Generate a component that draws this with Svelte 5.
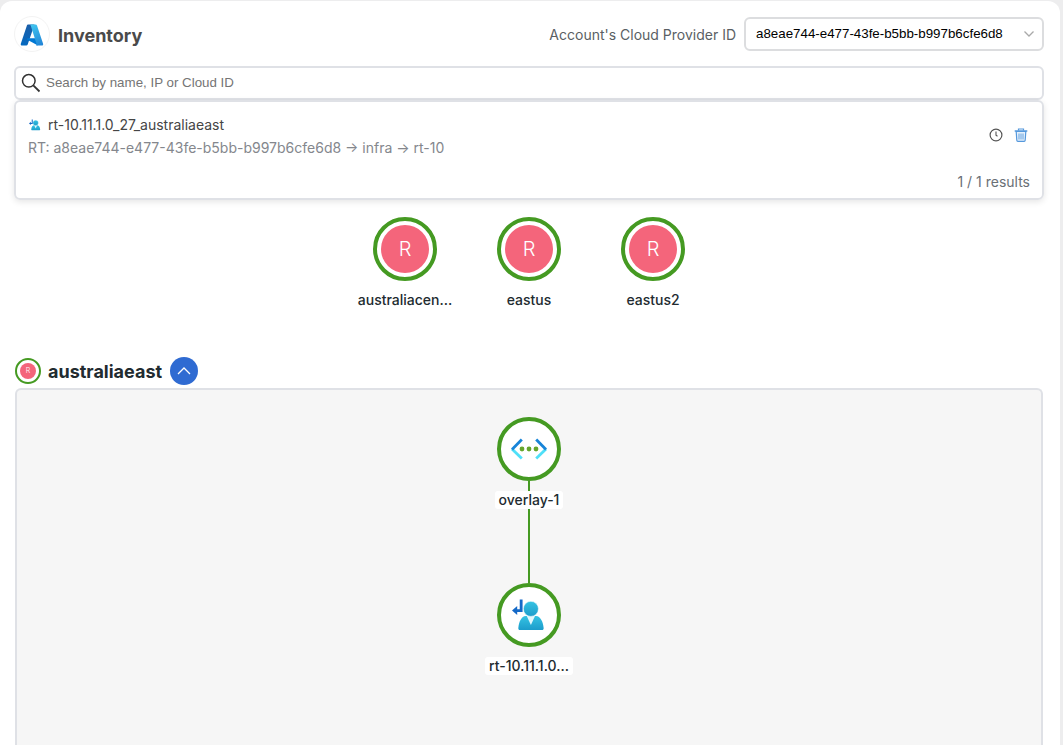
<script>
  const accounts = ['a8eae744-e477-43fe-b5bb-b997b6cfe6d8'];
  const regions = ['australiacen...', 'eastus', 'eastus2'];
  let account = $state(accounts[0]);
  let query = $state('');
  let open = $state(true);
</script>

{#snippet routeIcon(id)}
  <svg class="route" viewBox="0 0 36 36" aria-hidden="true">
    <defs>
      <linearGradient id="{id}-body" x1="0" y1="0" x2="0" y2="1">
        <stop offset="0" stop-color="#35c3e3" />
        <stop offset="1" stop-color="#1c9ccb" />
      </linearGradient>
    </defs>
    <path d="M8.500 34C7.300 34 6.500 33 6.700 31.700C7.500 24.500 10 19.500 14.500 19H25.500C30 19.500 32.800 24.500 33.500 31.700C33.700 33 32.900 34 31.700 34Z" fill="url(#{id}-body)" />
    <path d="M15.500 18.800L20 28.500L24.500 18.800Z" fill="#e4f8fd" />
    <circle cx="20" cy="11.500" r="8" fill="url(#{id}-body)" stroke="#fff" stroke-width="0.600" />
    <path d="M8.200 1.500H11.200V14.700H5.500V18L0 13.200L5.500 8.500V11.800H8.200Z" fill="#1569c7" />
  </svg>
{/snippet}

<main class="page">
  <header class="top">
    <span class="logo">
      <svg viewBox="0 0 24 24" width="24" height="24" aria-hidden="true">
        <defs>
          <linearGradient id="az-left" x1="0.600" y1="0" x2="0.300" y2="1">
            <stop offset="0" stop-color="#1b5ea8" />
            <stop offset="1" stop-color="#0669bf" />
          </linearGradient>
          <linearGradient id="az-right" x1="0.300" y1="0" x2="0.700" y2="1">
            <stop offset="0" stop-color="#3fc4ef" />
            <stop offset="1" stop-color="#2387d8" />
          </linearGradient>
        </defs>
        <path d="M8 1.500H14.500L7.700 21.500C7.500 22.100 7 22.500 6.300 22.500H2C1 22.500 .500 21.600 .800 20.700L6.900 2.400C7.100 1.800 7.400 1.500 8 1.500Z" fill="url(#az-left)" />
        <path d="M8 15.200H17.500L18 22.500L7.300 16.700C6.600 16.200 7 15.200 8 15.200Z" fill="#0078d4" />
        <path d="M9.500 1.500H15.600C16.300 1.500 16.800 1.900 17 2.400L23.100 20.700C23.400 21.600 22.900 22.500 22 22.500H15.300C16.300 22.500 16.700 21.600 16.500 20.700L10.700 2.400C10.500 1.900 10.100 1.500 9.500 1.500Z" fill="url(#az-right)" />
      </svg>
    </span>
    <h1>Inventory</h1>
    <label for="account">Account's Cloud Provider ID</label>
    <div class="picker">
      <select id="account" bind:value={account}>
        {#each accounts as id}<option value={id}>{id}</option>{/each}
      </select>
      <svg viewBox="0 0 12 12" width="12" height="12" aria-hidden="true"><path d="M1.500 3.500L6 8L10.500 3.500" fill="none" stroke="#a9a9a9" stroke-width="1.300" /></svg>
    </div>
  </header>

  <div class="search">
    <svg viewBox="0 0 20 20" width="20" height="20" aria-hidden="true">
      <circle cx="7.800" cy="7.800" r="6.300" fill="none" stroke="#333" stroke-width="1.500" />
      <path d="M12.300 12.300L18.500 18.500" stroke="#333" stroke-width="1.800" />
    </svg>
    <input type="text" aria-label="Search by name, IP or Cloud ID" placeholder="Search by name, IP or Cloud ID" bind:value={query} />
  </div>

  <section class="results">
    <div class="result">
      <div class="info">
        <a class="name" href="#route">{@render routeIcon('small')}<span>rt-10.11.1.0_27_australiaeast</span></a>
        <div class="trail">RT: a8eae744-e477-43fe-b5bb-b997b6cfe6d8 → infra → rt-10</div>
      </div>
      <div class="tools">
        <button aria-label="History">
          <svg viewBox="0 0 14 14" width="14" height="14"><circle cx="7" cy="7" r="5.900" fill="none" stroke="#555" stroke-width="1.200" /><path d="M7 3.500V7.300L8.500 8.300" fill="none" stroke="#555" stroke-width="1.100" /></svg>
        </button>
        <button aria-label="Delete">
          <svg viewBox="0 0 14 14" width="14" height="14" fill="none" stroke="#5598dc">
            <path d="M2.200 3.500H11.800L11.200 12.300Q11.100 13.300 10.200 13.300H3.800Q2.900 13.300 2.800 12.300Z" fill="#e6f1fc" stroke-width="1.200" />
            <path d="M.700 3H13.300" stroke-width="1.500" />
            <path d="M4.500 2.500V1H9.500V2.500" stroke-width="1.200" />
            <path d="M5 5.500V11.500M7 5.500V11.500M9 5.500V11.500" stroke-width="0.900" />
          </svg>
        </button>
      </div>
    </div>
    <div class="count">1 / 1 results</div>
  </section>

  <div class="regions">
    {#each regions as region}
      <div class="node">
        <span class="ring"><span class="disc">R</span></span>
        <span class="caption">{region}</span>
      </div>
    {/each}
  </div>

  <div class="region-head">
    <span class="ring mini"><span class="disc">R</span></span>
    <h2>australiaeast</h2>
    <button class="toggle" aria-label="Collapse region" aria-expanded={open} onclick={() => (open = !open)}>
      <svg viewBox="0 0 14 14" width="14" height="14" aria-hidden="true"><path d="M1 10L7 4L13 10" fill="none" stroke="#fff" stroke-width="1.300" /></svg>
    </button>
  </div>

  {#if open}
    <section class="canvas">
      <div class="node linked">
        <span class="ring">
          <svg viewBox="0 0 36 22" width="36" height="22" aria-hidden="true">
            <g fill="none" stroke-width="2.800">
              <path d="M1 11L10.800 20.500" stroke="#50e0f8" />
              <path d="M35 11L25.200 20.500" stroke="#50e0f8" />
              <path d="M1 11.500L10.800 1.500" stroke="#1784d8" />
              <path d="M35 11.500L25.200 1.500" stroke="#1784d8" />
            </g>
            <g fill="#65a52b"><circle cx="11" cy="11" r="2.400" /><circle cx="18" cy="11" r="2.400" /><circle cx="25" cy="11" r="2.400" /></g>
          </svg>
        </span>
        <span class="caption">overlay-1</span>
      </div>
      <div class="node">
        <span class="ring">{@render routeIcon('large')}</span>
        <span class="caption">rt-10.11.1.0...</span>
      </div>
    </section>
  {/if}
</main>

<style>
  :global(body) { background: #ededee; }
  * { box-sizing: border-box; }
  .page {
    display: flex;
    flex-direction: column;
    height: calc(100vh - 1px);
    margin: 1px 3px 0 0;
    padding: 16px 16px 0 14px;
    overflow: hidden;
    background: #fff;
    border-radius: 12px 12px 0 0;
    font-family: Inter, "Liberation Sans", sans-serif;
    font-size: 14px;
    line-height: 20px;
    color: #222b30;
  }
  h1, h2 { margin: 0; font-size: 18px; font-weight: 700; line-height: 24px; }
  button { padding: 0; border: 0; background: none; cursor: pointer; }
  svg { display: block; flex: none; }
  .top { display: flex; align-items: center; height: 34px; }
  .logo {
    display: grid;
    place-items: center;
    width: 36px;
    height: 36px;
    padding-top: 2px;
    border: 1px solid #f3f3f3;
    border-radius: 50%;
  }
  h1 { margin: 4px auto 0 8px; color: #4a4a4a; }
  .top label { margin: 2px 8px 0 16px; color: #5a5f64; }
  .picker { display: grid; align-items: center; width: 300px; }
  .picker > * { grid-area: 1 / 1; }
  .picker svg { justify-self: end; margin-right: 9px; pointer-events: none; }
  select {
    width: 100%;
    height: 34px;
    padding: 0 28px 2px 10px;
    border: 2px solid #dcdddf;
    border-radius: 6px;
    background: #fff;
    color: #000;
    font-family: "Liberation Sans", sans-serif;
    appearance: none;
  }
  .search {
    display: flex;
    align-items: center;
    gap: 5px;
    flex: none;
    height: 34px;
    margin-top: 15px;
    padding: 0 5px;
    border: 2px solid #dfe1e6;
    border-radius: 6px;
  }
  .search input {
    flex: 1;
    padding: 0 0 2px;
    border: 0;
    outline: 0;
    background: none;
    font-family: "Liberation Sans", sans-serif;
  }
  .search input::placeholder { color: #757575; }
  .results {
    flex: none;
    height: 100px;
    padding: 13px 12px 0;
    border: 2px solid #dfe1e6;
    border-radius: 6px;
    box-shadow: 0 2px 6px #0000001a;
  }
  .result { display: flex; align-items: center; }
  .info { flex: 1; }
  .name { display: flex; align-items: center; gap: 7px; color: #454545; text-decoration: none; }
  .name .route { width: 12px; height: 12px; margin-left: 1px; }
  .trail { margin-top: 3px; color: #84878d; }
  .tools { display: flex; gap: 11px; padding: 0 2px 4px 0; }
  .count { margin-top: 14px; text-align: right; color: #6a7076; }
  .regions { display: flex; justify-content: center; gap: 24px; margin-top: 17px; }
  .node { display: flex; flex-direction: column; align-items: center; gap: 10px; width: 100px; }
  .ring {
    display: grid;
    place-items: center;
    flex: none;
    width: 64px;
    height: 64px;
    border: 4px solid #459a22;
    border-radius: 50%;
    background: #fff;
  }
  .disc {
    display: grid;
    place-items: center;
    width: 48px;
    height: 48px;
    border-radius: 50%;
    background: #f4657b;
    color: #fff;
    font-size: 20px;
    font-weight: 300;
  }
  .mini { width: 26px; height: 26px; border-width: 2px; }
  .mini .disc { width: 16px; height: 16px; font-size: 7px; line-height: 8px; }
  .caption { padding: 0 4px; border-radius: 3px; background: #fff; font-weight: 500; line-height: 18px; white-space: nowrap; }
  .region-head { display: flex; align-items: center; height: 28px; margin: 48px 0 3px 1px; }
  h2 { margin: 2px 8px 0 7px; }
  .toggle { display: grid; place-items: center; width: 28px; height: 28px; border-radius: 50%; background: #2f6bd2; }
  .canvas {
    display: flex;
    flex: 1;
    flex-direction: column;
    align-items: center;
    gap: 74px;
    margin: 0 1px;
    padding-top: 27px;
    border: 2px solid #dfe1e6;
    border-bottom: 0;
    border-radius: 6px 6px 0 0;
    background: #f6f6f6;
  }
  .canvas .route { width: 34px; height: 34px; }
  .linked { position: relative; }
  .linked .caption { position: relative; }
  .linked::before {
    content: "";
    position: absolute;
    top: 64px;
    bottom: -74px;
    left: calc(50% - 1px);
    width: 2px;
    background: #459a22;
  }
</style>
